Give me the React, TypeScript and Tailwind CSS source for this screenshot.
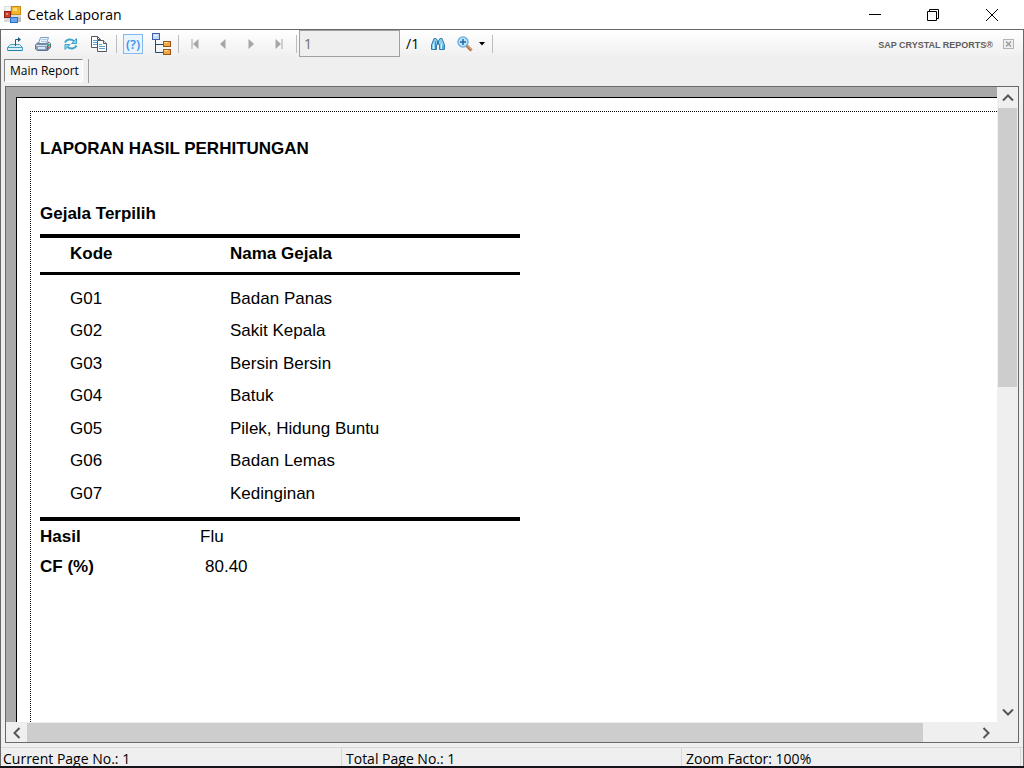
import { useState } from 'react'
import type { ReactNode } from 'react'

const SYMPTOMS = [
  { code: 'G01', name: 'Badan Panas' },
  { code: 'G02', name: 'Sakit Kepala' },
  { code: 'G03', name: 'Bersin Bersin' },
  { code: 'G04', name: 'Batuk' },
  { code: 'G05', name: 'Pilek, Hidung Buntu' },
  { code: 'G06', name: 'Badan Lemas' },
  { code: 'G07', name: 'Kedinginan' },
]

const uiFont = "font-['Open_Sans','Noto_Sans',sans-serif]"
const reportFont = "font-['Liberation_Sans',Arial,sans-serif]"

function AppIcon() {
  return (
    <svg width="17" height="17" viewBox="0 0 17 17" aria-hidden="true">
      <rect x="0" y="0" width="17" height="16" fill="#dcdcdc" />
      <rect x="1" y="1" width="5" height="4" fill="#f4f4f4" />
      <rect x="14" y="11" width="3" height="5" fill="#bdbdbd" />
      <rect x="0" y="5" width="7" height="7" fill="#8e1f12" />
      <rect x="1" y="6" width="5" height="5" fill="#c8412c" />
      <rect x="2" y="7" width="2" height="2" fill="#e88a72" />
      <rect x="7" y="0" width="10" height="9" fill="#c98a10" />
      <rect x="8" y="1" width="8" height="7" fill="#f5b52c" />
      <rect x="9" y="2" width="4" height="3" fill="#ffdc7a" />
      <rect x="6" y="11" width="8" height="6" fill="#2f6fc4" />
      <rect x="7" y="12" width="6" height="4" fill="#6aa8ee" />
    </svg>
  )
}

function ExportIcon() {
  return (
    <svg width="16" height="16" viewBox="0 0 16 16" aria-hidden="true">
      <path d="M3.500 8.500h9l3 3v3H.5v-3z" fill="#d9f0fa" stroke="#4a9cc0" />
      <path d="M.5 11.500h15" stroke="#4a9cc0" />
      <path d="M1 14.500h14" stroke="#1f7fae" />
      <path d="M8.500 10V3.500h3" fill="none" stroke="#1c5d7d" />
      <path d="M11 1l3 2.500L11 6z" fill="#1c5d7d" />
    </svg>
  )
}

function PrinterIcon() {
  return (
    <svg width="16" height="16" viewBox="0 0 16 16" aria-hidden="true">
      <path d="M5.500 1.500h8l-2 6h-8z" fill="#eaf4fd" stroke="#7c9fc4" />
      <path d="M6.500 3.500h5M6 5.500h5" stroke="#a9c8e6" />
      <path d="M3 6.500L.5 9v4l2 1.500h10l3-3V7.500L13.500 6l-2 2h-8z" fill="#8ba0bb" stroke="#5c7391" />
      <path d="M1 9.500h11l3-2.500" fill="none" stroke="#d2deec" />
      <path d="M12.500 10v4" stroke="#49627f" />
      <rect x="3" y="11" width="7" height="2" fill="#dce7f3" />
      <rect x="12" y="8" width="2" height="2" fill="#32b54a" />
      <rect x="12" y="11" width="2" height="1" fill="#d9482f" />
    </svg>
  )
}

function RefreshIcon() {
  return (
    <svg width="16" height="16" viewBox="0 0 16 16" aria-hidden="true">
      <path d="M2 6.500C3.500 3 8 2.500 11 5" fill="none" stroke="#3fa3cc" strokeWidth="2" />
      <path d="M13.500 2.500v5h-5z" fill="#8fd6ee" stroke="#3fa3cc" />
      <path d="M13.500 9.500C12 13 7.500 13.500 4.500 11" fill="none" stroke="#3fa3cc" strokeWidth="2" />
      <path d="M2 13.500v-5h5z" fill="#8fd6ee" stroke="#3fa3cc" />
    </svg>
  )
}

function CopyIcon() {
  return (
    <svg width="18" height="18" viewBox="0 0 18 18" aria-hidden="true">
      <path d="M1.500 1.500h6l3 3v8h-9z" fill="#fff" stroke="#4e5866" />
      <path d="M7.500 1.500v3h3" fill="none" stroke="#4e5866" />
      <path d="M3 5.500h4M3 7.500h5M3 9.500h4" stroke="#58a6d8" />
      <path d="M7.500 5.500h6l3 3v8h-9z" fill="#fff" stroke="#4e5866" />
      <path d="M13.500 5.500v3h3" fill="#dfe8f2" stroke="#4e5866" />
      <path d="M9 9.500h3M9 11.500h6M9 13.500h6" stroke="#58a6d8" />
    </svg>
  )
}

function TreeIcon() {
  return (
    <svg width="21" height="22" viewBox="0 0 21 22" aria-hidden="true">
      <path d="M4.500 7v12.500H12M4.500 11.500H12" fill="none" stroke="#26466b" />
      <rect x="1.500" y=".5" width="7" height="6" fill="#c3dafa" stroke="#3f5fa8" />
      <path d="M3 2.500h3" stroke="#fff" />
      <rect x="12.500" y="8.500" width="7" height="5" fill="#f6a63a" stroke="#96531c" />
      <path d="M13 9.500h4" stroke="#ffe0a6" />
      <rect x="12.500" y="16.500" width="7" height="5" fill="#f6a63a" stroke="#96531c" />
      <path d="M13 17.500h4" stroke="#ffe0a6" />
    </svg>
  )
}

function BinocularsIcon() {
  return (
    <svg width="16" height="14" viewBox="0 0 16 14" aria-hidden="true">
      <path d="M4 1.500h2L7.500 4v3.500h-1v5h-5V8z" fill="#8fcdec" stroke="#2f7cab" />
      <path d="M12 1.500h-2L8.500 4v3.500h1v5h5V8z" fill="#8fcdec" stroke="#2f7cab" />
      <path d="M3.500 7v5M11.500 7v5" stroke="#d8f0fb" />
      <path d="M5.500 4v8M13 8v4" stroke="#3f93c2" />
    </svg>
  )
}

function ZoomIcon() {
  return (
    <svg width="16" height="16" viewBox="0 0 16 16" aria-hidden="true">
      <path d="M9.500 9.500l5 5" stroke="#b0683c" strokeWidth="3" />
      <path d="M10 9.500l4.500 4.500" stroke="#f8c896" />
      <circle cx="6" cy="6" r="5" fill="#bfe4fb" stroke="#6cb2e4" strokeWidth="1.500" />
      <path d="M6 3v6M3 6h6" stroke="#24679b" strokeWidth="1.500" />
    </svg>
  )
}

function NavIcon({ d, bar }: { d: string; bar?: string }) {
  return (
    <svg width="8" height="10" viewBox="0 0 8 10" aria-hidden="true">
      <path d={d} fill="#a6a6a6" />
      {bar && <path d={bar} stroke="#a6a6a6" />}
    </svg>
  )
}

function Chevron({ d }: { d: string }) {
  return (
    <svg width="12" height="12" viewBox="0 0 12 12" aria-hidden="true">
      <path d={d} fill="none" stroke="#555" strokeWidth="2" />
    </svg>
  )
}

function ToolButton({ label, disabled, children }: { label: string; disabled?: boolean; children: ReactNode }) {
  return (
    <button type="button" aria-label={label} disabled={disabled} className="w-7 h-full flex items-center justify-center">
      {children}
    </button>
  )
}

function Separator() {
  return <div className="w-px h-[18px] ml-[3px] mr-0.5 shrink-0 bg-[#bdbdbd]" />
}

function TitleBar() {
  return (
    <header className="h-[29px] flex items-center shrink-0 bg-white pl-1">
      <AppIcon />
      <h1 className="flex-1 pl-1.5 text-[14px] leading-5 text-black">Cetak Laporan</h1>
      <button type="button" aria-label="Minimize" className="w-[62px] h-full flex items-center justify-center">
        <svg width="12" height="12" viewBox="0 0 12 12"><path d="M0 5.500h12" stroke="#000" /></svg>
      </button>
      <button type="button" aria-label="Restore" className="w-[54px] h-full flex items-center justify-center">
        <svg width="12" height="12" viewBox="0 0 12 12">
          <path d="M.5 2.500h9v9h-9zM2.500 2.500v-2h9v9h-2" fill="none" stroke="#000" />
        </svg>
      </button>
      <button type="button" aria-label="Close" className="w-16 h-full flex items-center justify-center">
        <svg width="12" height="12" viewBox="0 0 12 12"><path d="M0 0l12 12M12 0L0 12" stroke="#000" /></svg>
      </button>
    </header>
  )
}

function Toolbar() {
  const [page, setPage] = useState('1')

  return (
    <div className="h-7 flex items-center shrink-0 bg-linear-to-b from-white to-[#efefef]">
      <ToolButton label="Export"><ExportIcon /></ToolButton>
      <ToolButton label="Print"><PrinterIcon /></ToolButton>
      <ToolButton label="Refresh"><RefreshIcon /></ToolButton>
      <ToolButton label="Copy"><CopyIcon /></ToolButton>
      <Separator />
      <ToolButton label="Parameters">
        <span className="w-5 h-5 flex items-center justify-center border border-[#84b9f0] bg-[#eaf4fd] text-[13px] leading-4 font-semibold text-[#3a92e8]">
          (?)
        </span>
      </ToolButton>
      <ToolButton label="Group tree"><TreeIcon /></ToolButton>
      <Separator />
      <ToolButton label="First page" disabled><NavIcon d="M7.500 0v10L2 5z" bar="M1 0v10" /></ToolButton>
      <ToolButton label="Previous page" disabled><NavIcon d="M6.500 0v10L1 5z" /></ToolButton>
      <ToolButton label="Next page" disabled><NavIcon d="M1.500 0v10L7 5z" /></ToolButton>
      <ToolButton label="Last page" disabled><NavIcon d="M.5 0v10L6 5z" bar="M7 0v10" /></ToolButton>
      <Separator />
      <input
        aria-label="Page number" value={page} disabled
        onChange={(e) => setPage(e.target.value)}
        className="w-[101px] h-[27px] mb-px border border-[#a0a0a0] bg-[#efefef] px-1 text-[14px] text-[#6d6d6d]"
      />
      <span className="w-6 pl-1.5 text-[14px] leading-5 text-black">/1</span>
      <ToolButton label="Find"><BinocularsIcon /></ToolButton>
      <button type="button" aria-label="Zoom" className="h-full flex items-center gap-1.5 pl-[5px] pr-1">
        <ZoomIcon />
        <svg width="6" height="4" viewBox="0 0 6 4" aria-hidden="true"><path d="M0 0h6L3 3.500z" fill="#000" /></svg>
      </button>
      <Separator />
      <span className={`ml-auto pt-0.5 text-[9px] leading-4 font-bold text-[#5e5e5e] ${reportFont}`}>SAP CRYSTAL REPORTS®</span>
      <button type="button" aria-label="Close view" className="w-[30px] h-full flex items-center justify-center">
        <svg width="11" height="10" viewBox="0 0 11 10">
          <rect x=".5" y=".5" width="10" height="9" fill="#f0f0f0" stroke="#b4b4b4" />
          <path d="M3 2.500l5 5M8 2.500l-5 5" stroke="#9c9c9c" strokeWidth="1.500" />
        </svg>
      </button>
    </div>
  )
}

function Report() {
  return (
    <div className="h-full overflow-hidden bg-[#a9a9a9] pl-2.5 pt-2.5">
      <div className="h-full border-l border-t border-black bg-white pl-[13px] pt-[13px]">
        <div className={`h-full border-l border-t border-dotted border-black pl-[9px] pt-[27px] text-[17px] leading-5 text-black ${reportFont}`}>
          <h2 className="font-bold">LAPORAN HASIL PERHITUNGAN</h2>
          <h3 className="font-bold mt-[45px]">Gejala Terpilih</h3>

          <table className="w-[480px] mt-2.5 border-collapse table-fixed text-left">
            <thead>
              <tr className="h-[37px] border-t-4 border-b-3 border-black">
                <th className="w-40 pl-[30px] pb-0.5 font-bold">Kode</th>
                <th className="pl-[30px] pb-0.5 font-bold">Nama Gejala</th>
              </tr>
            </thead>
            <tbody className="border-b-4 border-black before:block before:h-2">
              {SYMPTOMS.map((s) => (
                <tr key={s.code} className="odd:h-8 even:h-[33px]">
                  <td className="pl-[30px]">{s.code}</td>
                  <td className="pl-[30px]">{s.name}</td>
                </tr>
              ))}
              <tr className="h-[9px]" aria-hidden="true" />
            </tbody>
          </table>

          <dl className="grid grid-cols-[160px_1fr] gap-y-2.5 mt-1.5">
            <dt className="font-bold">Hasil</dt>
            <dd>Flu</dd>
            <dt className="font-bold">CF (%)</dt>
            <dd className="pl-[5px]">80.40</dd>
          </dl>
        </div>
      </div>
    </div>
  )
}

function VerticalScroll() {
  return (
    <div className="w-[21px] shrink-0 flex flex-col bg-[#efefef] px-px">
      <button type="button" aria-label="Scroll up" className="h-[21px] flex items-center justify-center">
        <Chevron d="M1 8.500l5-5 5 5" />
      </button>
      <div className="flex-1">
        <div className="h-[47%] bg-[#cdcdcd]" />
      </div>
      <button type="button" aria-label="Scroll down" className="h-[21px] flex items-center justify-center">
        <Chevron d="M1 3.500l5 5 5-5" />
      </button>
    </div>
  )
}

function HorizontalScroll() {
  return (
    <div className="h-5 shrink-0 flex bg-[#efefef] pt-px pr-[22px]">
      <button type="button" aria-label="Scroll left" className="w-[21px] flex items-center justify-center">
        <Chevron d="M8.500 1l-5 5 5 5" />
      </button>
      <div className="flex-1">
        <div className="h-full w-[94.5%] bg-[#cdcdcd]" />
      </div>
      <button type="button" aria-label="Scroll right" className="w-[21px] flex items-center justify-center">
        <Chevron d="M3.500 1l5 5-5 5" />
      </button>
    </div>
  )
}

export default function App() {
  return (
    <div className={`h-screen flex flex-col overflow-hidden bg-[#efefef] text-black ${uiFont}`}>
      <TitleBar />

      <main className="flex-1 min-h-0 flex flex-col border-x border-t border-[#696969]">
        <Toolbar />

        {/* Tabs */}
        <div className="h-7 shrink-0 flex items-start pl-[3px] pt-px">
          <button type="button" className="h-[23px] pl-[5px] pr-[3px] border border-l-[#858585] border-t-[#858585] border-r-white border-b-white bg-[#f7f7f7] text-[12px] leading-4">
            Main Report
          </button>
          <div className="w-px h-6 ml-[5px] bg-[#a0a0a0]" />
        </div>

        {/* Viewer */}
        <div className="flex-1 min-h-0 flex flex-col mx-1 mb-1 border border-[#696969]">
          <div className="flex-1 min-h-0 flex">
            <div className="flex-1 min-w-0"><Report /></div>
            <VerticalScroll />
          </div>
          <HorizontalScroll />
        </div>

        {/* Status bar */}
        <footer className="h-[19px] pr-0.5 shrink-0 grid grid-cols-3 border-t border-[#d7d7d7] text-[14px] leading-[22px] whitespace-nowrap">
          <span className="pl-0.5">Current Page No.: 1</span>
          <span className="pl-1 border-l border-[#d7d7d7]">Total Page No.: 1</span>
          <span className="pl-1 border-l border-r border-[#d7d7d7]">Zoom Factor: 100%</span>
        </footer>
      </main>
      <div className="h-0.5 shrink-0 bg-[#14141a]" />
    </div>
  )
}
